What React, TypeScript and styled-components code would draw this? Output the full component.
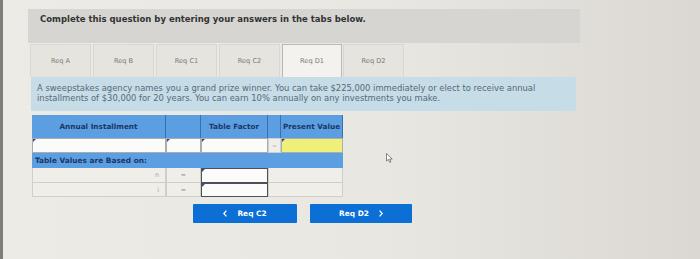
import React from "react";
import styled, { createGlobalStyle } from "styled-components";

const GlobalStyle = createGlobalStyle`
    html, body {
        margin: 0;
        padding: 0;
    }
    body {
        width: 700px;
        height: 259px;
        overflow: hidden;
        font-family: "DejaVu Sans", Verdana, sans-serif;
        background: linear-gradient(90deg, #7f7d77 0, #7f7d77 3px, #ecebe5 3px, #e9e7e1 55%, #dbd8d3 100%);
    }
`;

const Page = styled.div`
    position: relative;
    height: 259px;
    padding: 9px 0 0 28px;
    box-sizing: border-box;
`;

const Panel = styled.div`
    width: 552px;
`;

const Instruction = styled.div`
    height: 34px;
    background: #d6d5d2;
    color: #333;
    font-size: 8.5px;
    font-weight: bold;
    padding: 5px 0 0 12px;
    box-sizing: border-box;
`;

const Tabs = styled.div`
    display: flex;
    padding: 1px 0 0 2px;
    height: 34px;
    box-sizing: border-box;
`;

const Tab = styled.div<{ active?: boolean }>`
    width: ${p => (p.active ? 60 : 61)}px;
    margin-right: ${p => (p.active ? 1 : 2)}px;
    display: flex;
    align-items: center;
    justify-content: center;
    font-size: 6.6px;
    color: #7a7a78;
    background: ${p => (p.active ? "#f3f2ee" : "#e6e4de")};
    border: 1px solid ${p => (p.active ? "#b9b8b4" : "#d9d7d1")};
    border-bottom: none;
    box-sizing: border-box;
`;

const Description = styled.div`
    margin-left: 3px;
    width: 545px;
    height: 34px;
    background: #c6dce7;
    color: #56687a;
    font-size: 8.4px;
    line-height: 10px;
    padding: 6px 0 0 6px;
    box-sizing: border-box;
    white-space: nowrap;
`;

const Grid = styled.div`
    margin: 4px 0 0 4px;
    display: grid;
    grid-template-columns: 134px 35px 67px 13px 62px;
    grid-template-rows: 23px 15px 15px 15px 14px;
    width: 311px;
    background: #f2f1ec;
`;

const Head = styled.div`
    background: #5b9fe2;
    border-right: 1px solid #3a6fae;
    color: #1c3666;
    font-size: 7.3px;
    font-weight: bold;
    display: flex;
    align-items: center;
    justify-content: center;
    &:last-child {
        border-right: none;
    }
`;

const Band = styled.div`
    grid-column: 1 / -1;
    background: #5b9fe2;
    color: #1c3666;
    font-size: 7.4px;
    font-weight: bold;
    display: flex;
    align-items: center;
    padding-left: 3px;
`;

const Input = styled.div<{ tone?: "yellow"; dark?: boolean }>`
    position: relative;
    background: ${p => (p.tone === "yellow" ? "#eef07a" : "#fbfbf9")};
    border: 1px solid ${p => (p.dark ? "#4d5157" : "#a9acb0")};
    box-sizing: border-box;
    &::before {
        content: "";
        position: absolute;
        left: 0;
        top: 0;
        border-top: 3px solid #2c4f86;
        border-right: 3px solid transparent;
    }
`;

const Cell = styled.div<{ align?: "right" | "center"; span?: number }>`
    grid-column: ${p => (p.span ? `span ${p.span}` : "auto")};
    background: #efeee9;
    border: 1px solid #cfcec9;
    border-top: none;
    box-sizing: border-box;
    color: #a3a3a0;
    font-size: 6.4px;
    display: flex;
    align-items: center;
    justify-content: ${p => (p.align === "right" ? "flex-end" : "center")};
    padding-right: ${p => (p.align === "right" ? "6px" : "0")};
`;

const Equals = styled.div`
    background: #efeee9;
    border: 1px solid #d0cfca;
    box-sizing: border-box;
    color: #bdbdba;
    font-size: 6px;
    display: flex;
    align-items: center;
    justify-content: center;
`;

const Nav = styled.div`
    display: flex;
    gap: 13px;
    margin: 7px 0 0 165px;
`;

const NavButton = styled.div<{ wide?: boolean }>`
    width: ${p => (p.wide ? 104 : 102)}px;
    height: 19px;
    background: #0b6fd6;
    color: #fff;
    font-size: 7.4px;
    font-weight: bold;
    display: flex;
    align-items: center;
    justify-content: center;
    gap: 10px;
    border-radius: 1px;
`;

const Chevron = styled.svg`
    display: block;
`;

const Pointer = styled.svg`
    position: absolute;
    left: 386px;
    top: 153px;
`;

export default function App() {
    return (
        <>
            <GlobalStyle />
            <Page>
                <Panel>
                    <Instruction>Complete this question by entering your answers in the tabs below.</Instruction>
                    <Tabs>
                        <Tab>Req A</Tab>
                        <Tab>Req B</Tab>
                        <Tab>Req C1</Tab>
                        <Tab>Req C2</Tab>
                        <Tab active>Req D1</Tab>
                        <Tab>Req D2</Tab>
                    </Tabs>
                    <Description>
                        A sweepstakes agency names you a grand prize winner. You can take $225,000 immediately or elect to receive annual
                        <br />
                        installments of $30,000 for 20 years. You can earn 10% annually on any investments you make.
                    </Description>
                    <Grid>
                        <Head>Annual Installment</Head>
                        <Head />
                        <Head>Table Factor</Head>
                        <Head />
                        <Head>Present Value</Head>

                        <Input />
                        <Input />
                        <Input />
                        <Equals>=</Equals>
                        <Input tone="yellow" />

                        <Band>Table Values are Based on:</Band>

                        <Cell align="right">n</Cell>
                        <Cell>=</Cell>
                        <Input dark />
                        <Cell span={2} />

                        <Cell align="right">i</Cell>
                        <Cell>=</Cell>
                        <Input dark />
                        <Cell span={2} />
                    </Grid>
                    <Nav>
                        <NavButton wide>
                            <Chevron width="4" height="7" viewBox="0 0 4 7">
                                <path d="M3.4 0.6 L0.8 3.5 L3.4 6.4" fill="none" stroke="#fff" strokeWidth="1.3" />
                            </Chevron>
                            Req C2
                        </NavButton>
                        <NavButton>
                            Req D2
                            <Chevron width="4" height="7" viewBox="0 0 4 7">
                                <path d="M0.6 0.6 L3.2 3.5 L0.6 6.4" fill="none" stroke="#fff" strokeWidth="1.3" />
                            </Chevron>
                        </NavButton>
                    </Nav>
                </Panel>
                <Pointer width="7" height="10" viewBox="0 0 7 10">
                    <path d="M0.5 0.5 L0.5 8 L2.4 6.4 L3.7 9.3 L4.9 8.8 L3.7 6 L6.2 6 Z" fill="#fff" stroke="#555" strokeWidth="0.7" />
                </Pointer>
            </Page>
        </>
    );
}
